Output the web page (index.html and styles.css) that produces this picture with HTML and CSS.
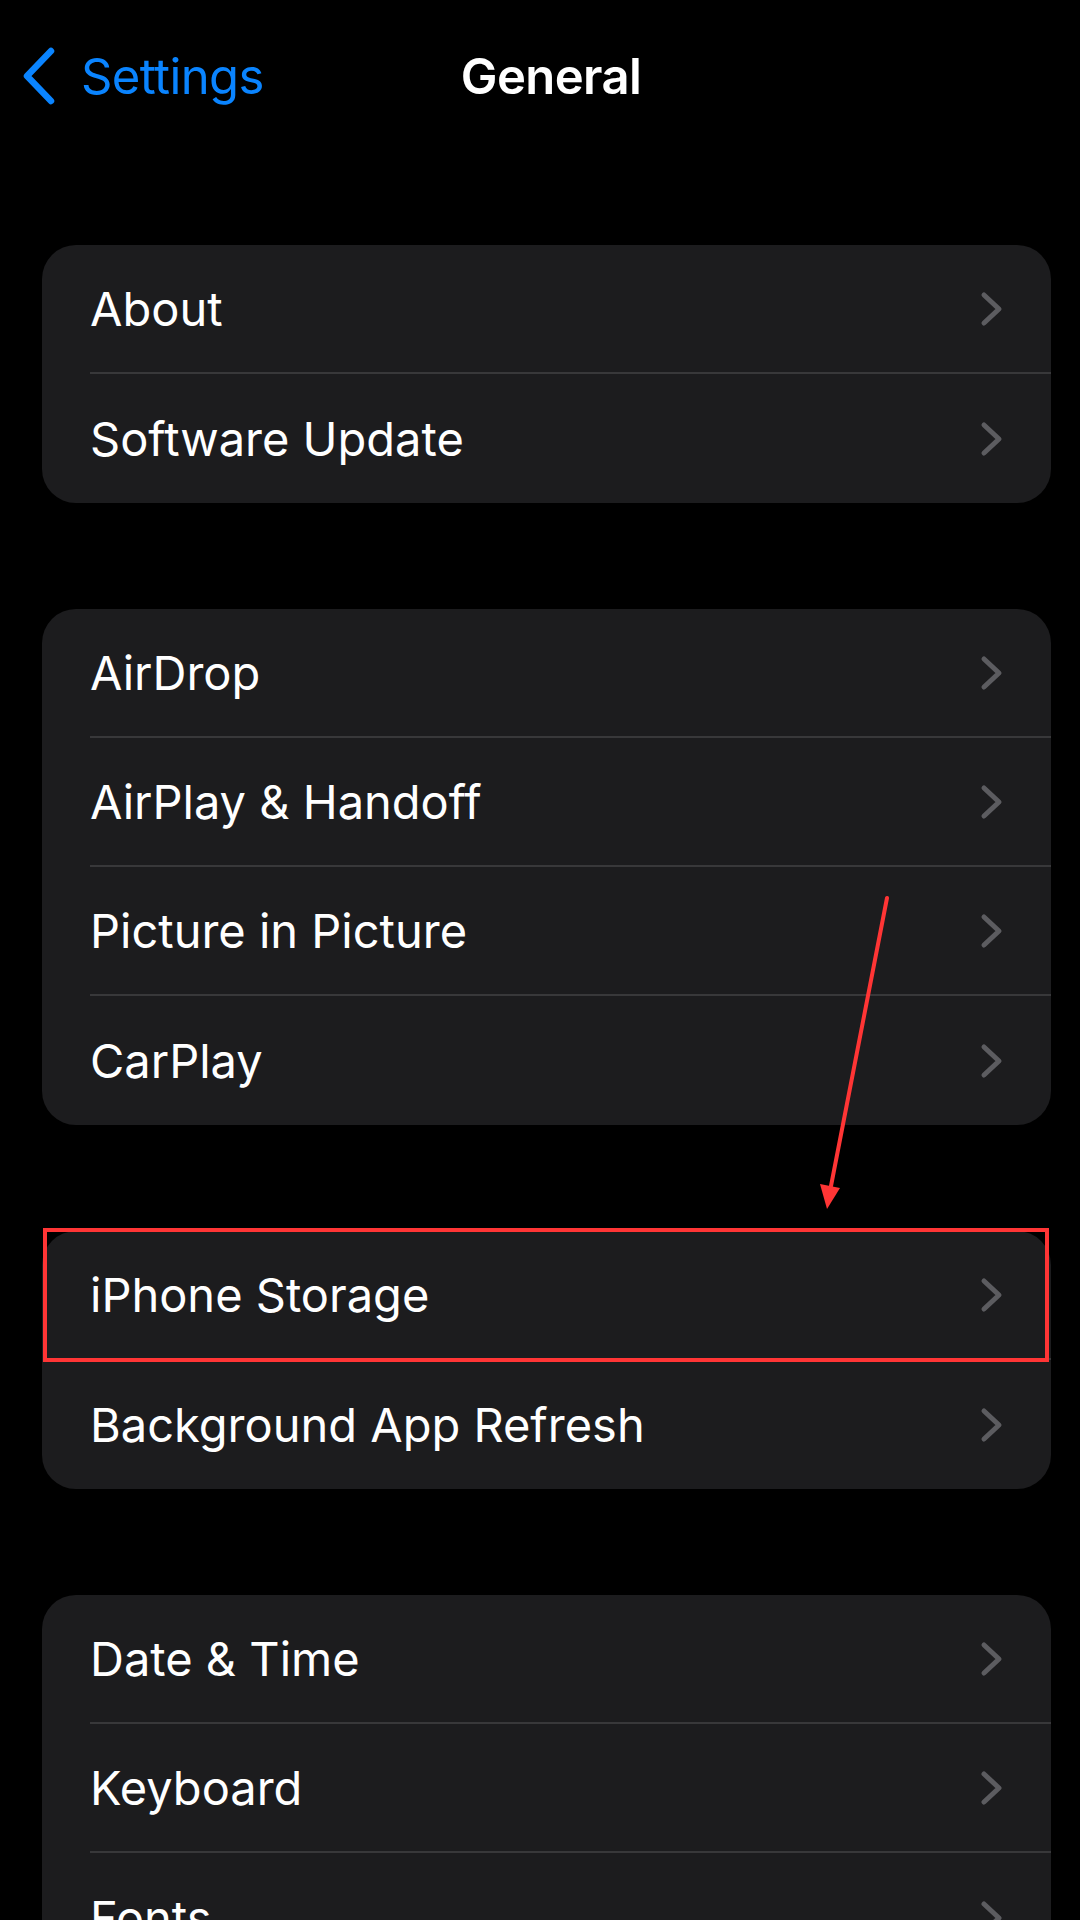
FILE: index.html
```html
<!DOCTYPE html>
<html lang="en">
<head>
<meta charset="utf-8">
<title>General</title>
<link rel="stylesheet" href="styles.css">
</head>
<body>
<div class="screen">
  <header class="nav">
    <div class="back">
      <svg class="back-icon" width="34" height="58" viewBox="0 0 34 58"><polyline points="29,4 5,29 29,54" fill="none" stroke="#0a84ff" stroke-width="6.5" stroke-linecap="round" stroke-linejoin="round"/></svg>
      <span class="back-label">Settings</span>
    </div>
    <div class="title">General</div>
    <div></div>
  </header>

  <main class="list">
    <section class="group">
      <div class="row"><div class="row-inner"><span class="label">About</span><svg class="chev" width="23" height="36" viewBox="0 0 23 36"><polyline points="4,4 19,18 4,32"/></svg></div></div>
      <div class="row"><div class="row-inner"><span class="label">Software Update</span><svg class="chev" width="23" height="36" viewBox="0 0 23 36"><polyline points="4,4 19,18 4,32"/></svg></div></div>
    </section>

    <section class="group">
      <div class="row"><div class="row-inner"><span class="label">AirDrop</span><svg class="chev" width="23" height="36" viewBox="0 0 23 36"><polyline points="4,4 19,18 4,32"/></svg></div></div>
      <div class="row"><div class="row-inner"><span class="label">AirPlay &amp; Handoff</span><svg class="chev" width="23" height="36" viewBox="0 0 23 36"><polyline points="4,4 19,18 4,32"/></svg></div></div>
      <div class="row"><div class="row-inner"><span class="label">Picture in Picture</span><svg class="chev" width="23" height="36" viewBox="0 0 23 36"><polyline points="4,4 19,18 4,32"/></svg></div></div>
      <div class="row"><div class="row-inner"><span class="label">CarPlay</span><svg class="chev" width="23" height="36" viewBox="0 0 23 36"><polyline points="4,4 19,18 4,32"/></svg></div></div>
    </section>

    <section class="group">
      <div class="row highlight"><div class="row-inner"><span class="label">iPhone Storage</span><svg class="chev" width="23" height="36" viewBox="0 0 23 36"><polyline points="4,4 19,18 4,32"/></svg></div></div>
      <div class="row"><div class="row-inner"><span class="label">Background App Refresh</span><svg class="chev" width="23" height="36" viewBox="0 0 23 36"><polyline points="4,4 19,18 4,32"/></svg></div></div>
    </section>

    <section class="group">
      <div class="row"><div class="row-inner"><span class="label">Date &amp; Time</span><svg class="chev" width="23" height="36" viewBox="0 0 23 36"><polyline points="4,4 19,18 4,32"/></svg></div></div>
      <div class="row"><div class="row-inner"><span class="label">Keyboard</span><svg class="chev" width="23" height="36" viewBox="0 0 23 36"><polyline points="4,4 19,18 4,32"/></svg></div></div>
      <div class="row"><div class="row-inner"><span class="label">Fonts</span><svg class="chev" width="23" height="36" viewBox="0 0 23 36"><polyline points="4,4 19,18 4,32"/></svg></div></div>
    </section>
  </main>

  <svg class="arrow" width="80" height="330" viewBox="0 0 80 330">
    <line x1="67" y1="8" x2="11" y2="296" stroke="#ff3535" stroke-width="4" stroke-linecap="round"/>
    <polygon points="7,319 0,294 20,298" fill="#ff3535"/>
  </svg>
</div>
</body>
</html>
```

FILE: styles.css
```css
* { box-sizing: border-box; }

html, body {
  margin: 0;
  padding: 0;
  background: #000;
}

body {
  width: 1080px;
  height: 1920px;
  overflow: hidden;
  font-family: Inter, "Noto Sans", "Liberation Sans", sans-serif;
  color: #fff;
  -webkit-font-smoothing: antialiased;
}

.screen {
  position: relative;
  width: 1080px;
  height: 1920px;
  overflow: hidden;
}

.nav {
  height: 152px;
  display: grid;
  grid-template-columns: 1fr auto 1fr;
  align-items: center;
  padding-left: 22px;
}

.back {
  display: flex;
  align-items: center;
  gap: 25px;
}

.back-icon { display: block; }

.back-label {
  color: #0a84ff;
  font-size: 49px;
  letter-spacing: -0.6px;
  line-height: 1;
}

.title {
  font-size: 49px;
  font-weight: 600;
  letter-spacing: -0.6px;
  line-height: 1;
}

.list {
  padding-top: 93px;
  margin-left: 42px;
  margin-right: 29px;
  display: flex;
  flex-direction: column;
  gap: 106px;
}

.group {
  background: #1c1c1e;
  border-radius: 34px;
}

.row {
  position: relative;
  padding-left: 48px;
  height: 129px;
}

.row-inner {
  height: 100%;
  display: flex;
  align-items: center;
  justify-content: space-between;
  padding-right: 48px;
  border-bottom: 2px solid #38383a;
}

.row:last-child .row-inner { border-bottom: none; }

.label {
  font-size: 47px;
  letter-spacing: 0;
  line-height: 1;
  color: #fff;
}

.chev {
  display: block;
  flex: none;
}

.chev polyline {
  fill: none;
  stroke: #5c5c60;
  stroke-width: 5;
  stroke-linecap: round;
  stroke-linejoin: round;
}

.highlight::after {
  content: "";
  position: absolute;
  top: -3px;
  bottom: -2px;
  left: 1px;
  right: 2px;
  border: 4px solid #ff3535;
  pointer-events: none;
}

.arrow {
  position: absolute;
  left: 820px;
  top: 890px;
}
```
